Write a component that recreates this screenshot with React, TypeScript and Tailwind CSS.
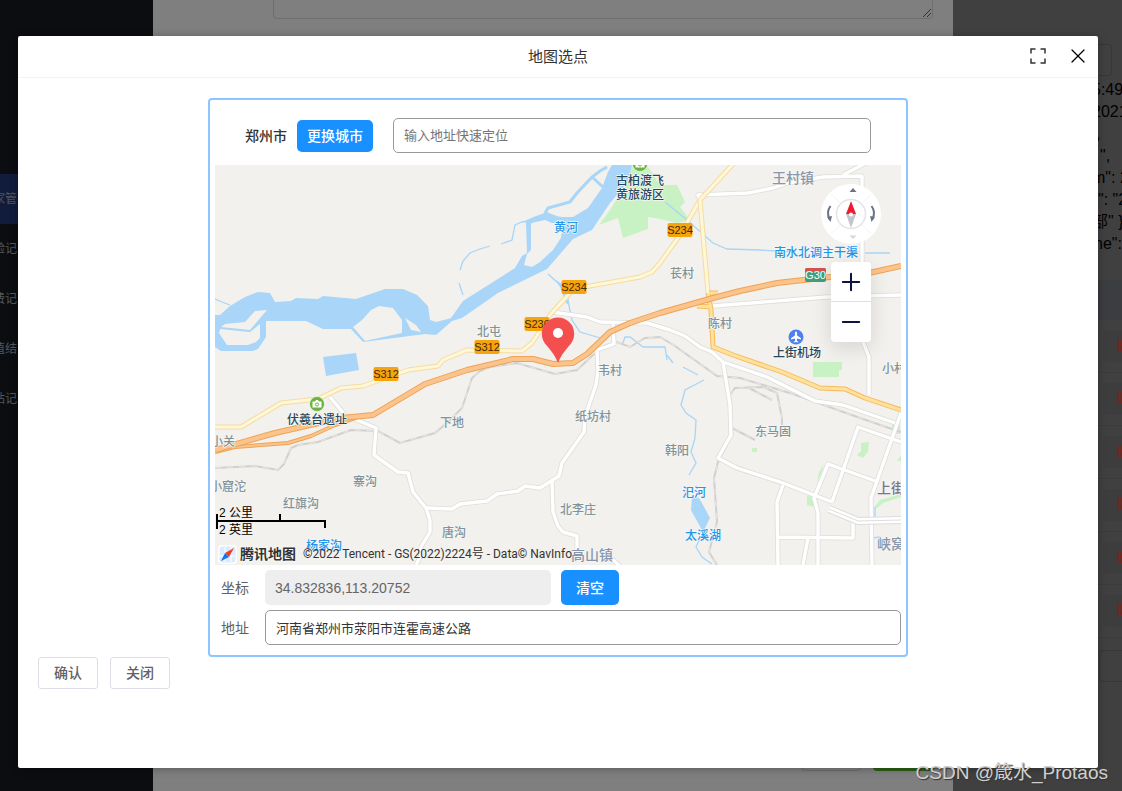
import { useState } from 'react';
import { Minus, Plus, X } from 'lucide-react';

const menuItems = ['家管', '验记', '费记', '值结', '站记'];

const logLines = [
  { text: '5:49', indent: '' },
  { text: '2021', indent: '' },
  { text: ',', indent: 'pl-1' },
  { text: '",', indent: 'pl-2' },
  { text: 'm": 2', indent: '' },
  { text: '": "2', indent: 'pl-1.5' },
  { text: '部" }', indent: '' },
  { text: 'ne":', indent: 'pl-0.5' },
];

const water = [
  'M215 315L220 315L230 306L245 297L258 292L270 293L275 302L291 301L296 298L318 299L323 296L356 299L385 289L403 289L417 295L428 306L430 320L436 322L448 319L451 318L463 301L515 268L522 256L527 253L526 223L545 213L553 217L573 217L588 208L602 188L608 172L612 165L632 165L627 183L610 203L592 230L573 239L547 269L498 293L462 318L452 321L436 335L425 334L363 342L351 329L323 329L306 321L266 321L266 337L258 349L253 351L221 351L215 347Z',
  'M323 357L356 353L359 370L326 376Z',
  'M692 498L699 498L703 505L710 518L703 532L691 510Z',
];

const islands = [
  'M220 329L250 332L260 324L260 338L256 342L248 345L227 345L219 333Z',
  'M221 327L225 324L245 322L255 311L267 310L250 330Z',
  'M353 327L362 320L371 310L379 306L393 308L402 320L402 333L365 341Z',
  'M405 318L416 325L421 332L411 330Z',
  'M531 223L545 220L552 223L563 223L561 238L553 250L540 262L532 267L524 265L527 254L531 250Z',
];

const streams = [
  'M545 213L548 208L570 202L577 193L592 177L600 171L607 167M592 177L603 187',
  'M530 221L522 222L515 225L512 240L501 244M490 246L480 249L470 253L463 261L460 270M459 283L463 295',
  'M215 299L222 302L230 305',
  'M548 274L558 283L567 293L569 306L572 320L580 332L607 340M623 343L625 337L630 337L643 347L665 347L667 360',
  'M665 202L687 220L713 243L727 249L760 250L793 252M865 253L890 253',
  'M704 380L685 390L681 405L686 413L696 420L695 438L691 452L696 463L689 475M667 355L673 363M683 367L698 375',
  'M703 532L696 547L702 557L712 564',
  'M875 507L875 518M873 528L873 538L880 537',
];

const parks = [
  'M632 165L647 165L660 185L677 185L685 202L680 207L690 220L677 223L660 219L648 217L648 229L623 238L618 218L599 225L610 210L627 183Z',
  'M813 362H842V370H839V377H813Z',
  'M752 448H757V452H752Z',
  'M861 443L869 442L868 452L863 458L857 455L861 451Z',
  'M824 464L821 474L817 483L819 472Z',
  'M807 496L814 496L813 507L807 505Z',
  'M875 506L880 500L901 494V497L883 503L876 509Z',
  'M892 425H900V434H892Z',
  'M901 455L897 461H901Z',
];

const railways = [
  'M215 468L255 466L278 470L284 464L291 448L298 445L318 442L351 430L378 431L400 443L435 433L448 422L462 408L472 378L480 371L490 367L517 363L555 374L577 370L593 355L604 346L617 342L630 347L645 338L660 337L675 346L717 376L740 378L793 394L860 418L901 432',
  'M730 395L735 388L763 387L777 393L782 418L782 437',
  'M772 400L747 387',
  'M730 395L732 428L755 440',
  'M733 433L718 462L714 478L717 522L709 552L717 565',
];

const streets = [
  'M700 200L698 195L748 193L773 188L788 183L823 177L862 176L862 262M843 175L866 163',
  'M863 342L869 357L869 395',
  'M713 306L827 297L901 295',
  'M552 312L587 317L600 322L647 323L670 330L685 336L700 347L712 352L723 362L767 377L815 401L843 405L895 423',
  'M723 362L730 405L731 435L718 458L737 468L783 483L832 502',
  'M783 485L777 502L778 565M777 537L853 538L853 522',
  'M832 502L858 427L901 442',
  'M901 413L871 498L872 565',
  'M878 482L828 464L814 498L818 513L818 565M808 538L803 565',
  'M613 323L614 344L597 350L598 370L596 385L590 402L585 418L584 432L562 463L559 476L540 488L525 486L518 491L497 494L487 501L460 504L452 509L426 508',
  'M552 481L553 512L558 526L563 532L577 536L577 554M612 559L620 566',
  'M330 397L345 415L376 428L374 455L398 472L408 473L413 492L426 508L430 520L430 532L421 547L421 555L416 565',
];

const provincialRoads = [
  'M734 163L700 200L680 235L660 263L652 272L640 277L590 286L577 288L570 293L550 315L532 343L522 351L467 350L443 360L438 366L408 370L363 386L341 388L318 399L281 403L241 427L215 427',
  'M700 200L708 293',
];

const countyRoad =
  'M708 293L711 310L713 347L733 355L782 372L820 388L845 389L865 398L901 410M697 306L712 307M709 293L718 293';

const highways = [
  'M215 452L235 447L288 443L311 436L335 425L358 417',
  'M901 266L860 275L830 277L777 283L740 291L713 298L660 313L630 323L610 332L587 354L573 363L553 364L533 359L513 359L467 370L425 384L373 415L341 418L275 433L215 450',
];

const labelKinds = {
  village: 'fill-[#80939b] text-[12px] font-medium',
  water: 'fill-[#1f95ec] text-[12px] font-medium',
  place: 'fill-[#29475c] text-[12px] font-medium',
  town: 'fill-[#8796ad] text-[14px] font-medium',
  district: 'fill-[#77758b] text-[14px] font-medium',
};

type Label = { text: string; x: number; y: number; kind: keyof typeof labelKinds; anchor?: 'start' | 'end' };

const labels: Label[] = [
  { text: '王村镇', x: 793, y: 183, kind: 'town' },
  { text: '高山镇', x: 592, y: 560, kind: 'town' },
  { text: '峡窝镇', x: 877, y: 549, kind: 'town', anchor: 'start' },
  { text: '上街区', x: 877, y: 493, kind: 'district', anchor: 'start' },
  { text: '古柏渡飞', x: 640, y: 185, kind: 'place' },
  { text: '黄旅游区', x: 640, y: 199, kind: 'place' },
  { text: '上街机场', x: 797, y: 357, kind: 'place' },
  { text: '伏羲台遗址', x: 317, y: 424, kind: 'place' },
  { text: '黄河', x: 566, y: 232, kind: 'water' },
  { text: '南水北调主干渠', x: 816, y: 257, kind: 'water' },
  { text: '汜河', x: 694, y: 497, kind: 'water' },
  { text: '太溪湖', x: 703, y: 540, kind: 'water' },
  { text: '杨家沟', x: 324, y: 550, kind: 'water' },
  { text: '苌村', x: 682, y: 278, kind: 'village' },
  { text: '陈村', x: 720, y: 328, kind: 'village' },
  { text: '北屯', x: 489, y: 336, kind: 'village' },
  { text: '韦村', x: 610, y: 375, kind: 'village' },
  { text: '纸坊村', x: 593, y: 421, kind: 'village' },
  { text: '下地', x: 452, y: 427, kind: 'village' },
  { text: '寨沟', x: 365, y: 486, kind: 'village' },
  { text: '红旗沟', x: 301, y: 508, kind: 'village' },
  { text: '小关', x: 235, y: 446, kind: 'village', anchor: 'end' },
  { text: '小窟沱', x: 246, y: 491, kind: 'village', anchor: 'end' },
  { text: '唐沟', x: 454, y: 537, kind: 'village' },
  { text: '北李庄', x: 578, y: 514, kind: 'village' },
  { text: '韩阳', x: 677, y: 455, kind: 'village' },
  { text: '东马固', x: 773, y: 436, kind: 'village' },
  { text: '小村', x: 882, y: 373, kind: 'village', anchor: 'start' },
];

const roadSigns = [
  { text: 'S234', x: 680, y: 230 },
  { text: 'S234', x: 574, y: 287 },
  { text: 'S230', x: 537, y: 324 },
  { text: 'S312', x: 487, y: 347 },
  { text: 'S312', x: 386, y: 374 },
];

function Road({ d, width, fill, edge }: { d: string; width: number; fill: string; edge: string }) {
  return (
    <g fill="none" strokeLinejoin="round">
      <path d={d} stroke={edge} strokeWidth={width + 2} />
      <path d={d} stroke={fill} strokeWidth={width} />
    </g>
  );
}

function CameraMark({ x, y }: { x: number; y: number }) {
  return (
    <g transform={`translate(${x} ${y})`}>
      <circle r="7.5" fill="#6cb33f" stroke="#fff" strokeWidth="0.6" />
      <path d="M-4.5 -2.5H-2L-1 -4H1L2 -2.5H4.5V3.5H-4.5Z" fill="#fff" />
      <circle cy="0.5" r="1.6" fill="none" stroke="#6cb33f" strokeWidth="1" />
    </g>
  );
}

function MapCanvas() {
  return (
    <svg
      viewBox="215 165 686 400"
      role="img"
      aria-label="地图"
      className="block h-auto w-full bg-[#f2f1ed] font-['Noto_Sans_CJK_SC',sans-serif]"
    >
      {parks.map((d) => (
        <path key={d} d={d} fill="#c9f2c4" />
      ))}
      {water.map((d) => (
        <path key={d} d={d} fill="#a8d5f8" />
      ))}
      {islands.map((d) => (
        <path key={d} d={d} fill="#f2f1ed" />
      ))}
      {streams.map((d, i) => (
        <path key={d} d={d} fill="none" stroke="#a8d5f8" strokeWidth={i === 0 ? 3 : 1.3} />
      ))}
      <path d="M526 223L535 219L547 215L558 219L573 221" fill="none" stroke="#a8d5f8" strokeWidth="5" />
      <path d="M556 280L563 285L569 305L566 303L560 287Z" fill="#a8d5f8" />

      {railways.map((d) => (
        <g key={d} fill="none">
          <path d={d} stroke="#d0d0d0" strokeWidth="2" />
          <path d={d} stroke="#e9e8e6" strokeWidth="1" strokeDasharray="6 6" />
        </g>
      ))}
      {streets.map((d) => (
        <path key={d} d={d} fill="none" stroke="#dddddb" strokeWidth="5" strokeLinejoin="round" />
      ))}
      {streets.map((d) => (
        <path key={d} d={d} fill="none" stroke="#fff" strokeWidth="3.4" strokeLinejoin="round" />
      ))}
      <Road d="M829 509L858 521L901 520" width={6} fill="#fff" edge="#dddddb" />
      <path d="M829 509L858 521L901 520" fill="none" stroke="#dddddb" strokeWidth="1" />
      {provincialRoads.map((d) => (
        <Road key={d} d={d} width={3} fill="#fff7d6" edge="#f3dca6" />
      ))}
      <Road d={countyRoad} width={3} fill="#ffe199" edge="#f5bb62" />
      {highways.map((d, i) => (
        <Road key={d} d={d} width={i === 0 ? 2 : 4} fill="#fac48c" edge="#efa355" />
      ))}

      {labels.map((label) => (
        <text
          key={label.text}
          x={label.x}
          y={label.y}
          textAnchor={label.anchor ?? 'middle'}
          stroke="#f7f6f3"
          strokeWidth="1.5"
          strokeLinejoin="round"
          paintOrder="stroke"
          className={labelKinds[label.kind]}
        >
          {label.text}
        </text>
      ))}

      {roadSigns.map((sign) => (
        <g key={`${sign.x}-${sign.y}`}>
          <rect x={sign.x - 12.5} y={sign.y - 7} width="25" height="14" rx="2" fill="#f5a30f" />
          <text
            x={sign.x}
            y={sign.y + 4}
            textAnchor="middle"
            className="fill-[#422a04] font-['Liberation_Sans',sans-serif] text-[11px]"
          >
            {sign.text}
          </text>
        </g>
      ))}
      <rect x="805" y="268" width="21" height="14" rx="2" fill="#3f9f7c" />
      <path d="M805 271V270A2 2 0 0 1 807 268H824A2 2 0 0 1 826 270V271Z" fill="#d4524f" />
      <text
        x="815.5"
        y="279"
        textAnchor="middle"
        className="fill-white font-['Liberation_Sans',sans-serif] text-[11px]"
      >
        G30
      </text>

      <CameraMark x={317} y={404} />
      <CameraMark x={640} y={164} />
      <g transform="translate(796 337)">
        <circle r="7.5" fill="#4f80f2" />
        <path
          d="M0 -5.5C0.9 -5.5 1.1 -4.5 1.1 -3.5V-1.5L5 1.3V2.6L1.1 1.6L0.8 3.7L2.2 4.7V5.5L0 5L-2.2 5.5V4.7L-0.8 3.7L-1.1 1.6L-5 2.6V1.3L-1.1 -1.5V-3.5C-1.1 -4.5 -0.9 -5.5 0 -5.5Z"
          fill="#fff"
        />
      </g>

      {/* Selected point */}
      <path
        d="M558 363C556 357 552 352 547.5 346.5C544 343 541.8 339 541.8 333.7A16.2 16.2 0 0 1 574.2 333.7C574.2 339 572 343 568.5 346.5C564 352 560 357 558 363Z"
        fill="#f44e4f"
      />
      <circle cx="558" cy="333" r="5" fill="#fff" />

      {/* Scale */}
      <path d="M217 514V529M216 521H326M280 514V521M325 521V528" fill="none" stroke="#000" strokeWidth="2" />
      <g className="font-['Liberation_Sans','Noto_Sans_CJK_SC',sans-serif] text-[12px]">
        <text x="219" y="517">2 公里</text>
        <text x="219" y="534">2 英里</text>
      </g>
    </svg>
  );
}

function Compass() {
  return (
    <svg viewBox="-31 -31 62 62" className="size-[62px]" aria-hidden="true">
      <circle r="30" fill="#fff" />
      <path d="M-20 -20L-11 -11M20 -20L11 -11M-20 20L-11 11M20 20L11 11" stroke="#f3f3f5" strokeWidth="1" />
      <circle r="14.5" fill="#fff" stroke="#e3e4e8" strokeWidth="1.5" />
      <path d="M0 -13L5 0H-5Z" fill="#f01c2e" />
      <path d="M0 14L5 0H-5Z" fill="#c3c5cb" />
      <circle r="2" cy="0.5" fill="#fff" />
      <path d="M2 -26L5.5 -22H-1.5Z" fill="#6b7486" />
      <path d="M2 25L5.5 21.5H-1.5Z" fill="#d5d7dc" />
      <g fill="none" stroke="#6b7486" strokeWidth="2">
        <path d="M-20.5 -8C-23.5 -4 -23.5 1 -21.5 5" />
        <path d="M20.5 -8C23.5 -4 23.5 1 21.5 5" />
      </g>
      <path d="M-24 3L-19 2L-20.5 8ZM24 3L19 2L20.5 8Z" fill="#6b7486" />
    </svg>
  );
}

function PageBehind() {
  return (
    <div className="flex min-h-screen overflow-hidden" aria-hidden="true">
      <aside className="w-[153px] shrink-0 bg-[#0b0d11] pt-[174px] text-xs text-[#55575a]">
        {menuItems.map((item, i) => (
          <div key={item} className={`flex h-[50px] items-center ${i === 0 ? 'bg-[#111c3d]' : ''}`}>
            <span className="-ml-[7px]">{item}</span>
          </div>
        ))}
      </aside>

      <main className="flex min-w-0 flex-1 flex-col justify-between bg-[#7f7f7f] px-5 pb-[20px]">
        <div className="ml-[100px] flex h-[19px] items-end justify-end rounded-b border border-t-0 border-[#6d6f73]">
          <svg viewBox="0 0 10 10" className="size-2.5" fill="none" stroke="#333">
            <path d="M1 9L9 1M5 9L9 5" />
          </svg>
        </div>
        <div className="flex justify-end gap-3">
          <span className="h-8 w-[60px] rounded border border-[#6d6f73]" />
          <span className="h-8 w-[60px] rounded bg-[#2c6112]" />
        </div>
      </main>

      <section className="w-[169px] shrink-0 overflow-hidden bg-[#404040] pt-11">
        <div className="mr-[10px] h-8 rounded border border-[#363738]" />
        <div className="pt-[3px] pb-px pl-[139px] font-['Liberation_Sans','Noto_Sans_CJK_SC',sans-serif] text-base leading-[22px] whitespace-nowrap text-black">
          {logLines.map((line) => (
            <div key={line.text} className={`h-[22px] ${line.indent}`}>
              {line.text}
            </div>
          ))}
        </div>
        <div className="mt-6 h-10 bg-[#3b3d41]" />
        {[1, 2, 3, 4, 5, 6].map((row) => (
          <div key={row} className="flex h-[53px] items-center border-b border-[#3a3b3c] pl-[150px]">
            <span className="h-8 w-20 shrink-0 rounded bg-[#3d3d3d] pl-[14px] text-xs leading-8 font-medium text-[#7a241b]">
              删除
            </span>
          </div>
        ))}
        <div className="mt-3 ml-[146px] h-8 rounded-l border border-r-0 border-[#363738]" />
      </section>
    </div>
  );
}

export default function App() {
  const [keyword, setKeyword] = useState('');
  const [coords, setCoords] = useState('34.832836,113.20752');
  const [address, setAddress] = useState('河南省郑州市荥阳市连霍高速公路');

  return (
    <div className="relative min-h-screen overflow-hidden font-['Liberation_Sans','Noto_Sans_CJK_SC',sans-serif] text-sm text-[#333]">
      <PageBehind />

      <div className="absolute inset-0 flex pt-9 pr-6 pb-[23px] pl-[18px]">
        <div
          role="dialog"
          aria-labelledby="dialog-title"
          className="min-w-0 flex-1 rounded-xs bg-white shadow-[0_1px_8px_rgba(0,0,0,0.3)]"
        >
          <header className="grid h-[42px] grid-cols-[1fr_auto_1fr] items-center border-b border-[#f3f3f3]">
            <h2 id="dialog-title" className="col-start-2 text-[15px]">
              地图选点
            </h2>
            <div className="flex items-center justify-end gap-5 pr-2 pb-0.5">
              <button type="button" aria-label="全屏">
                <svg viewBox="0 0 16 16" className="size-4" fill="none" stroke="#333" strokeWidth="1.5">
                  <path d="M1 5.5V1H5.5M10.5 1H15V5.5M15 10.5V15H10.5M5.5 15H1V10.5" />
                </svg>
              </button>
              <button type="button" aria-label="关闭窗口">
                <X className="size-6 text-black" strokeWidth={1.25} />
              </button>
            </div>
          </header>

          <div className="p-5">
            {/* Location picker */}
            <div className="mx-auto max-w-[700px] rounded border-2 border-[#8cc5ff] px-[5px] pt-[18px] pb-[10px]">
              <div className="flex items-center px-[30px]">
                <span className="font-medium">郑州市</span>
                <button
                  type="button"
                  className="ml-[10px] h-8 rounded-[5px] bg-[#1890ff] px-[10px] font-medium text-white"
                >
                  更换城市
                </button>
                <input
                  type="text"
                  aria-label="输入地址快速定位"
                  placeholder="输入地址快速定位"
                  value={keyword}
                  onChange={(e) => setKeyword(e.target.value)}
                  className="ml-5 h-[35px] min-w-0 flex-1 rounded-[5px] border border-[#999] px-[10px] text-[13px] placeholder:text-[#757575]"
                />
              </div>

              <div className="relative mt-3">
                <MapCanvas />
                <div className="absolute top-[18px] right-[19px]">
                  <Compass />
                </div>
                <div className="absolute top-[97px] right-[30px] w-10 divide-y divide-[#dcdfe6] rounded bg-white text-[#0b1540] shadow-[0_6px_20px_rgba(0,0,0,0.12)]">
                  <button type="button" aria-label="放大" className="flex h-10 w-full items-center justify-center">
                    <Plus className="size-7" strokeWidth={1.75} />
                  </button>
                  <button type="button" aria-label="缩小" className="flex h-10 w-full items-center justify-center">
                    <Minus className="size-7" strokeWidth={1.75} />
                  </button>
                </div>
                <div className="absolute bottom-px left-[3px] flex items-center whitespace-nowrap">
                  <svg viewBox="0 0 19 19" className="size-[19px]" aria-hidden="true">
                    <rect width="19" height="19" rx="4" fill="#fff" />
                    <rect x="1.5" y="1.5" width="16" height="16" rx="3" fill="#d9ecfd" />
                    <path d="M1.5 11H17M7 2V17M13 2V17" stroke="#fff" />
                    <path d="M16 3L7 8L11 12Z" fill="#fa3a1c" />
                    <path d="M3 16L7 8L11 12Z" fill="#1273f5" />
                  </svg>
                  <span className="ml-[3px] leading-5 font-bold [text-shadow:0_0_2px_#fff,0_0_2px_#fff]">腾讯地图</span>
                  <span className="ml-[7px] font-[Roboto,'Noto_Sans_CJK_SC',sans-serif] text-xs leading-5">
                    ©2022 Tencent - GS(2022)2224号 - Data© NavInfo
                  </span>
                </div>
              </div>

              <div className="mt-[5px] flex items-center">
                <label htmlFor="coords" className="w-[50px] shrink-0 pl-1.5 text-[#606060]">
                  坐标
                </label>
                <input
                  id="coords"
                  type="text"
                  readOnly
                  value={coords}
                  className="h-[35px] w-[286px] rounded-[5px] bg-[#eee] px-[10px] text-[#666]"
                />
                <button
                  type="button"
                  onClick={() => setCoords('')}
                  className="ml-[10px] h-[35px] rounded-[5px] bg-[#1890ff] px-[15px] font-medium text-white"
                >
                  清空
                </button>
              </div>

              <div className="mt-[5px] flex items-center">
                <label htmlFor="address" className="w-[50px] shrink-0 pl-1.5 text-[#606060]">
                  地址
                </label>
                <input
                  id="address"
                  type="text"
                  value={address}
                  onChange={(e) => setAddress(e.target.value)}
                  className="h-[35px] min-w-0 flex-1 rounded-[5px] border border-[#999] px-[10px] text-[13px]"
                />
              </div>
            </div>

            {/* Footer buttons */}
            <div className="flex gap-3 font-medium text-[#606266]">
              <button type="button" className="h-8 rounded-[3px] border border-[#dcdfe6] px-[15px]">
                确认
              </button>
              <button type="button" className="h-8 rounded-[3px] border border-[#dcdfe6] px-[15px]">
                关闭
              </button>
            </div>
          </div>
        </div>
      </div>

      <div className="absolute right-3.5 bottom-1 text-[19px] leading-7 text-[#d0d0d0] [text-shadow:1px_1px_1px_#333]">
        CSDN @箴水_Protaos
      </div>
    </div>
  );
}
